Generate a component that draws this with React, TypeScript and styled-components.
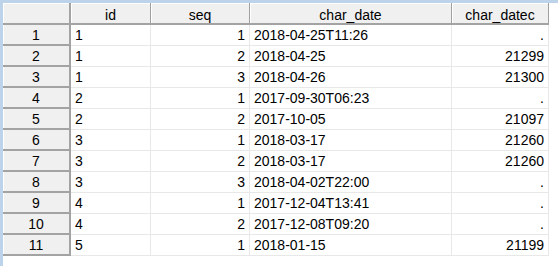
import React from "react";
import styled, { createGlobalStyle } from "styled-components";

const Global = createGlobalStyle`
  html, body { margin: 0; padding: 0; background: #ffffff; }
  body { font-family: "Liberation Sans", Arial, sans-serif; }
`;

const Frame = styled.div`
  width: 558px;
  height: 266px;
  box-sizing: border-box;
  border-top: 3px solid #bcd3ea;
  border-left: 3px solid #bcd3ea;
  background: #ffffff;
  overflow: hidden;
`;

const Grid = styled.div`
  display: grid;
  grid-template-columns: 68px 80px 99px 202px 97px;
  grid-template-rows: 22px;
  grid-auto-rows: 21px;
  width: 546px;
  font-family: "Liberation Sans", Arial, sans-serif;
  font-size: 14px;
  color: #000;
`;

const HeaderCell = styled.div<{ $corner?: boolean }>`
  box-sizing: border-box;
  background: #f0f0f0;
  border-right: ${(p) => (p.$corner ? "2px solid #a3a3a3" : "1px solid #a0a0a0")};
  border-bottom: 2px solid #a3a3a3;
  box-shadow: inset 1px 1px 0 #ffffff;
  padding-top: 4px;
  line-height: 16px;
  text-align: center;
  white-space: nowrap;
  overflow: hidden;
`;

const RowHeader = styled.div`
  box-sizing: border-box;
  background: #f0f0f0;
  border-right: 2px solid #a3a3a3;
  border-bottom: 2px solid #a3a3a3;
  box-shadow: inset 1px 0 0 #ffffff;
  line-height: 20px;
  text-align: center;
  white-space: nowrap;
`;

const DataCell = styled.div<{ $align: "left" | "right" }>`
  box-sizing: border-box;
  background: #ffffff;
  border-right: 1px solid #e8e8e8;
  border-bottom: 1px solid #e8e8e8;
  line-height: 20px;
  text-align: ${(p) => p.$align};
  padding: ${(p) => (p.$align === "left" ? "0 0 0 4px" : "0 4px 0 0")};
  white-space: nowrap;
  overflow: hidden;
`;

type Row = { id: number; seq: number; date: string; datec: string };

const rows: Row[] = [
  { id: 1, seq: 1, date: "2018-04-25T11:26", datec: "." },
  { id: 1, seq: 2, date: "2018-04-25", datec: "21299" },
  { id: 1, seq: 3, date: "2018-04-26", datec: "21300" },
  { id: 2, seq: 1, date: "2017-09-30T06:23", datec: "." },
  { id: 2, seq: 2, date: "2017-10-05", datec: "21097" },
  { id: 3, seq: 1, date: "2018-03-17", datec: "21260" },
  { id: 3, seq: 2, date: "2018-03-17", datec: "21260" },
  { id: 3, seq: 3, date: "2018-04-02T22:00", datec: "." },
  { id: 4, seq: 1, date: "2017-12-04T13:41", datec: "." },
  { id: 4, seq: 2, date: "2017-12-08T09:20", datec: "." },
  { id: 5, seq: 1, date: "2018-01-15", datec: "21199" },
];

export default function App() {
  return (
    <>
      <Global />
      <Frame>
        <Grid>
          <HeaderCell $corner />
          <HeaderCell>id</HeaderCell>
          <HeaderCell>seq</HeaderCell>
          <HeaderCell>char_date</HeaderCell>
          <HeaderCell>char_datec</HeaderCell>
          {rows.map((r, i) => (
            <React.Fragment key={i}>
              <RowHeader>{i + 1}</RowHeader>
              <DataCell $align="left">{r.id}</DataCell>
              <DataCell $align="right">{r.seq}</DataCell>
              <DataCell $align="left">{r.date}</DataCell>
              <DataCell $align="right">{r.datec}</DataCell>
            </React.Fragment>
          ))}
        </Grid>
      </Frame>
    </>
  );
}
